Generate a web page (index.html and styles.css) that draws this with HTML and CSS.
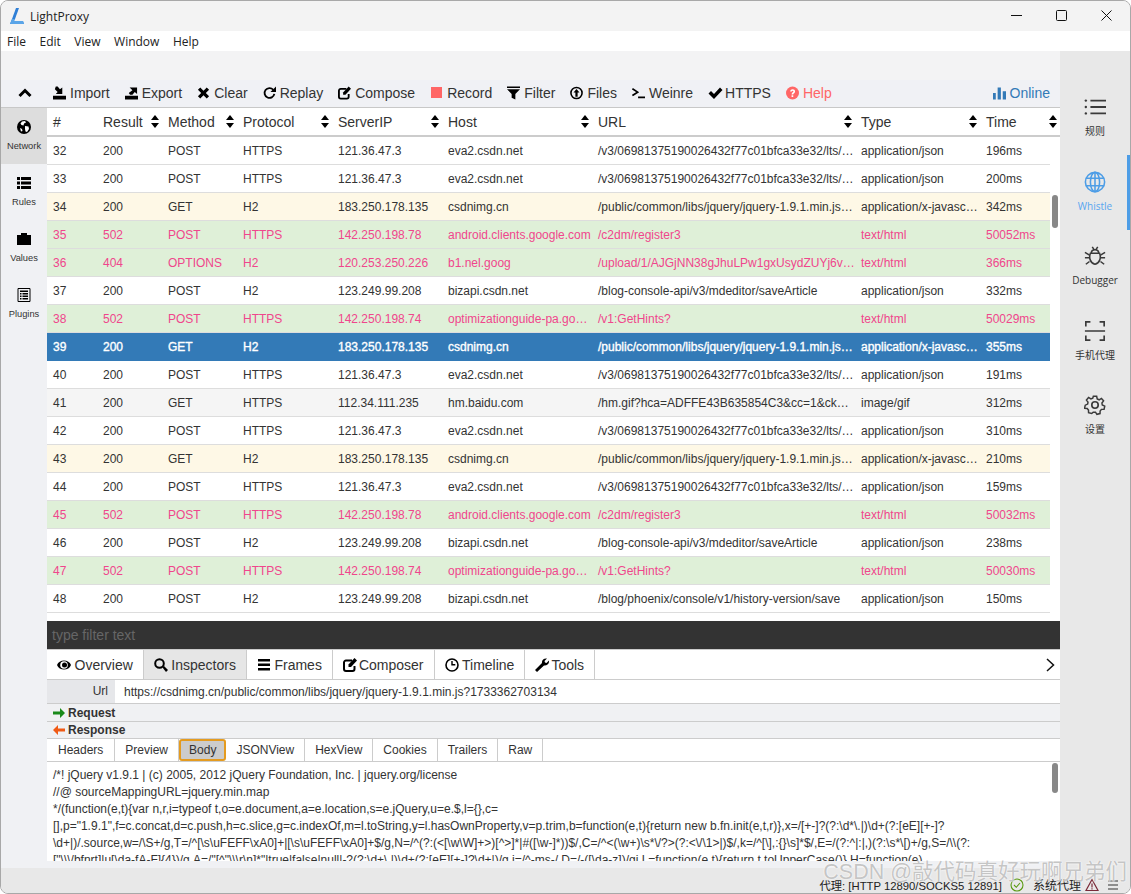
FILE: index.html
```html
<!DOCTYPE html>
<html lang="en">
<head>
<meta charset="utf-8">
<title>LightProxy</title>
<link rel="stylesheet" href="styles.css">
</head>
<body>
<div class="window">
  <header class="titlebar">
    <svg class="logo" viewBox="0 0 14 16"><path d="M6 0h3L5 11H2z" fill="#2f7fd6"/><path d="M2 11h3l-1 2h9l1 3H0z" fill="#2f7fd6"/><path d="M0 16l2-5h3l-1 2h9l1 3z" fill="#5aa5e8"/></svg>
    <span class="apptitle">LightProxy</span>
    <div class="winbtns">
      <svg class="winicon" viewBox="0 0 11 11"><path d="M0 5.500h11" stroke="#111" fill="none"/></svg>
      <svg class="winicon" viewBox="0 0 11 11"><rect x=".5" y=".5" width="10" height="10" rx="1" stroke="#111" fill="none"/></svg>
      <svg class="winicon" viewBox="0 0 11 11"><path d="M.5.5l10 10M10.500 .5l-10 10" stroke="#111" fill="none"/></svg>
    </div>
  </header>
  <nav class="menubar"><span>File</span><span>Edit</span><span>View</span><span>Window</span><span>Help</span></nav>
  <div class="app">
    <main class="main">
      <div class="spacer"></div>
      <div class="toolbar">
        <span class="collapse"><svg viewBox="0 0 14 10" class="chev"><path d="M1.500 8L7 2.500 12.500 8" fill="none" stroke="#000" stroke-width="3"/></svg></span>
        <span class="tool"><svg class="ic" viewBox="0 0 14 14"><path d="M0 10h14v4H0z"/><path d="M3 0l2 0 2.500 3L10 1v7H3l2-2-3-3z"/></svg>Import</span>
        <span class="tool"><svg class="ic" viewBox="0 0 14 14"><path d="M0 10h14v4H0z"/><path d="M5 1h8v7l-2.500-2L8 9H5.500L4 7l4-3z"/></svg>Export</span>
        <span class="tool"><svg class="ic" viewBox="0 0 14 14"><path d="M1 3.500L3.500 1 7 4.500 10.500 1 13 3.500 9.500 7 13 10.500 10.500 13 7 9.500 3.500 13 1 10.500 4.500 7z"/></svg>Clear</span>
        <span class="tool"><svg class="ic" viewBox="0 0 14 14"><path d="M11 3.500A5.300 5.300 0 1 0 12.200 8" fill="none" stroke="#000" stroke-width="2"/><path d="M14 0v6H8z"/></svg>Replay</span>
        <span class="tool"><svg class="ic" viewBox="0 0 14 14"><path d="M9 2.500H3a2 2 0 0 0-2 2V11a2 2 0 0 0 2 2h6.500a2 2 0 0 0 2-2V8" fill="none" stroke="#000" stroke-width="2"/><path d="M11.500 0L14 2.500 8 9H5.500V6.500z"/></svg>Compose</span>
        <span class="tool rec"><i class="recdot"></i>Record</span>
        <span class="tool"><svg class="ic" viewBox="0 0 14 14"><path d="M0 0h14v1.500H0z"/><path d="M0 3h14L9 8v6l-4-2V8z"/></svg>Filter</span>
        <span class="tool"><svg class="ic" viewBox="0 0 14 14"><circle cx="7" cy="7" r="6" fill="none" stroke="#000" stroke-width="1.700"/><path d="M7 2.800L10.200 6.500H8.200V11H5.800V6.500H3.800z"/></svg>Files</span>
        <span class="tool"><svg class="ic" viewBox="0 0 15 14"><path d="M.5 2l6 4-6 4" fill="none" stroke="#000" stroke-width="2"/><path d="M7 11h8v2H7z"/></svg>Weinre</span>
        <span class="tool tight"><svg class="ic wide" viewBox="0 0 15 14"><path d="M.5 7.500L3 5l3 3 6-6.500 2.500 2.500L6 13z"/></svg>HTTPS</span>
        <span class="tool help"><svg class="ic" viewBox="0 0 14 14"><circle cx="7" cy="7" r="7" fill="#f66"/><path d="M4.500 5.500C4.500 2.300 9.800 2.300 9.800 5.300c0 2-2 1.800-2 3.200H6c0-2.200 2-2.200 2-3.200 0-1.100-1.800-1.100-1.800.2zM6 9.500h1.800v1.800H6z" fill="#fff"/></svg>Help</span>
        <span class="tool online"><svg class="ic" viewBox="0 0 14 14"><path d="M0 7h3v7H0zM5 1h3.500v13H5zM10.500 5H14v9h-3.500z" fill="#337ab7"/></svg>Online</span>
      </div>
      <div class="content">
        <aside class="leftnav">
          <div class="lnav on"><svg class="lic" viewBox="0 0 14 14"><circle cx="7" cy="7" r="7"/><path d="M5 1.500l3-.5 1 1.500-2 1-.5 2-2-.5-1-1.500zM8 6l3.500.5.500 2.500-2 3-1.500-.5-.5-2.500zM3 8l2 1 .5 2-1.500.5z" fill="#fff"/></svg><span>Network</span></div>
          <div class="lnav"><svg class="lic" viewBox="0 0 14 14"><path d="M0 1h3v3H0zM4 1h10v3H4zM0 5.500h3v3H0zM4 5.500h10v3H4zM0 10h3v3H0zM4 10h10v3H4z"/></svg><span>Rules</span></div>
          <div class="lnav"><svg class="lic" viewBox="0 0 14 14"><path d="M4 1h6v2H4z"/><path d="M0 3h14v10H0z"/></svg><span>Values</span></div>
          <div class="lnav"><svg class="lic" viewBox="0 0 14 14"><path d="M1 .5h12v13H1z" fill="none" stroke="#000"/><path d="M3 2.500h8v1.500H3zM3 5h1.500v1.500H3zM5.500 5H11v1.500H5.500zM3 7.500h1.500V9H3zM5.500 7.500H11V9H5.500zM3 10h1.500v1.500H3zM5.500 10H11v1.500H5.500z"/></svg><span>Plugins</span></div>
        </aside>
        <section class="panel">
          <div class="list">
            <div class="row head">
              <div class="cell"># </div>
              <div class="cell sort">Result<i class="updown"></i></div>
              <div class="cell sort">Method<i class="updown"></i></div>
              <div class="cell sort">Protocol<i class="updown"></i></div>
              <div class="cell sort">ServerIP<i class="updown"></i></div>
              <div class="cell sort">Host<i class="updown"></i></div>
              <div class="cell sort">URL<i class="updown"></i></div>
              <div class="cell sort">Type<i class="updown"></i></div>
              <div class="cell sort">Time<i class="updown"></i></div>
            </div>
            <div class="row"><div class="cell">32</div><div class="cell">200</div><div class="cell">POST</div><div class="cell">HTTPS</div><div class="cell">121.36.47.3</div><div class="cell">eva2.csdn.net</div><div class="cell">/v3/06981375190026432f77c01bfca33e32/lts/collect/report</div><div class="cell">application/json</div><div class="cell">196ms</div></div>
            <div class="row"><div class="cell">33</div><div class="cell">200</div><div class="cell">POST</div><div class="cell">HTTPS</div><div class="cell">121.36.47.3</div><div class="cell">eva2.csdn.net</div><div class="cell">/v3/06981375190026432f77c01bfca33e32/lts/collect/report</div><div class="cell">application/json</div><div class="cell">200ms</div></div>
            <div class="row js"><div class="cell">34</div><div class="cell">200</div><div class="cell">GET</div><div class="cell">H2</div><div class="cell">183.250.178.135</div><div class="cell">csdnimg.cn</div><div class="cell">/public/common/libs/jquery/jquery-1.9.1.min.js?1733362703134</div><div class="cell">application/x-javascript</div><div class="cell">342ms</div></div>
            <div class="row err"><div class="cell">35</div><div class="cell">502</div><div class="cell">POST</div><div class="cell">HTTPS</div><div class="cell">142.250.198.78</div><div class="cell">android.clients.google.com</div><div class="cell">/c2dm/register3</div><div class="cell">text/html</div><div class="cell">50052ms</div></div>
            <div class="row err"><div class="cell">36</div><div class="cell">404</div><div class="cell">OPTIONS</div><div class="cell">H2</div><div class="cell">120.253.250.226</div><div class="cell">b1.nel.goog</div><div class="cell">/upload/1/AJGjNN38gJhuLPw1gxUsydZUYj6vKm2pQx</div><div class="cell">text/html</div><div class="cell">366ms</div></div>
            <div class="row"><div class="cell">37</div><div class="cell">200</div><div class="cell">POST</div><div class="cell">H2</div><div class="cell">123.249.99.208</div><div class="cell">bizapi.csdn.net</div><div class="cell">/blog-console-api/v3/mdeditor/saveArticle</div><div class="cell">application/json</div><div class="cell">332ms</div></div>
            <div class="row err"><div class="cell">38</div><div class="cell">502</div><div class="cell">POST</div><div class="cell">HTTPS</div><div class="cell">142.250.198.74</div><div class="cell">optimizationguide-pa.googleapis.com</div><div class="cell">/v1:GetHints?</div><div class="cell">text/html</div><div class="cell">50029ms</div></div>
            <div class="row sel"><div class="cell">39</div><div class="cell">200</div><div class="cell">GET</div><div class="cell">H2</div><div class="cell">183.250.178.135</div><div class="cell">csdnimg.cn</div><div class="cell">/public/common/libs/jquery/jquery-1.9.1.min.js?1733362703134</div><div class="cell">application/x-javascript</div><div class="cell">355ms</div></div>
            <div class="row"><div class="cell">40</div><div class="cell">200</div><div class="cell">POST</div><div class="cell">HTTPS</div><div class="cell">121.36.47.3</div><div class="cell">eva2.csdn.net</div><div class="cell">/v3/06981375190026432f77c01bfca33e32/lts/collect/report</div><div class="cell">application/json</div><div class="cell">191ms</div></div>
            <div class="row img"><div class="cell">41</div><div class="cell">200</div><div class="cell">GET</div><div class="cell">HTTPS</div><div class="cell">112.34.111.235</div><div class="cell">hm.baidu.com</div><div class="cell">/hm.gif?hca=ADFFE43B635854C3&amp;cc=1&amp;ck=1&amp;cl=24-bit</div><div class="cell">image/gif</div><div class="cell">312ms</div></div>
            <div class="row"><div class="cell">42</div><div class="cell">200</div><div class="cell">POST</div><div class="cell">HTTPS</div><div class="cell">121.36.47.3</div><div class="cell">eva2.csdn.net</div><div class="cell">/v3/06981375190026432f77c01bfca33e32/lts/collect/report</div><div class="cell">application/json</div><div class="cell">310ms</div></div>
            <div class="row js"><div class="cell">43</div><div class="cell">200</div><div class="cell">GET</div><div class="cell">H2</div><div class="cell">183.250.178.135</div><div class="cell">csdnimg.cn</div><div class="cell">/public/common/libs/jquery/jquery-1.9.1.min.js?1733362703134</div><div class="cell">application/x-javascript</div><div class="cell">210ms</div></div>
            <div class="row"><div class="cell">44</div><div class="cell">200</div><div class="cell">POST</div><div class="cell">HTTPS</div><div class="cell">121.36.47.3</div><div class="cell">eva2.csdn.net</div><div class="cell">/v3/06981375190026432f77c01bfca33e32/lts/collect/report</div><div class="cell">application/json</div><div class="cell">159ms</div></div>
            <div class="row err"><div class="cell">45</div><div class="cell">502</div><div class="cell">POST</div><div class="cell">HTTPS</div><div class="cell">142.250.198.78</div><div class="cell">android.clients.google.com</div><div class="cell">/c2dm/register3</div><div class="cell">text/html</div><div class="cell">50032ms</div></div>
            <div class="row"><div class="cell">46</div><div class="cell">200</div><div class="cell">POST</div><div class="cell">H2</div><div class="cell">123.249.99.208</div><div class="cell">bizapi.csdn.net</div><div class="cell">/blog-console-api/v3/mdeditor/saveArticle</div><div class="cell">application/json</div><div class="cell">238ms</div></div>
            <div class="row err"><div class="cell">47</div><div class="cell">502</div><div class="cell">POST</div><div class="cell">HTTPS</div><div class="cell">142.250.198.74</div><div class="cell">optimizationguide-pa.googleapis.com</div><div class="cell">/v1:GetHints?</div><div class="cell">text/html</div><div class="cell">50030ms</div></div>
            <div class="row"><div class="cell">48</div><div class="cell">200</div><div class="cell">POST</div><div class="cell">H2</div><div class="cell">123.249.99.208</div><div class="cell">bizapi.csdn.net</div><div class="cell">/blog/phoenix/console/v1/history-version/save</div><div class="cell">application/json</div><div class="cell">150ms</div></div>
            <i class="thumb listthumb"></i>
          </div>
          <div class="filter">type filter text</div>
          <div class="tabs">
            <span class="tab"><svg class="ic" viewBox="0 0 14 14"><path d="M0 7c2-6 12-6 14 0-2 6-12 6-14 0z"/><circle cx="7" cy="7" r="3.800" fill="#fff"/><circle cx="7.500" cy="7" r="2.500"/></svg>Overview</span>
            <span class="tab on"><svg class="ic" viewBox="0 0 14 14"><circle cx="5.500" cy="5.500" r="4.300" fill="none" stroke="#000" stroke-width="2"/><path d="M8.500 9.500l1.500-1.500 4 4-2 2z"/></svg>Inspectors</span>
            <span class="tab"><svg class="ic" viewBox="0 0 14 14"><path d="M1 1h12v2.500H1zM1 5.500h12V8H1zM1 10h12v2.500H1z"/></svg>Frames</span>
            <span class="tab tight"><svg class="ic" viewBox="0 0 14 14"><path d="M9 2.500H3a2 2 0 0 0-2 2V11a2 2 0 0 0 2 2h6.500a2 2 0 0 0 2-2V8" fill="none" stroke="#000" stroke-width="2"/><path d="M11.500 0L14 2.500 8 9H5.500V6.500z"/></svg>Composer</span>
            <span class="tab"><svg class="ic" viewBox="0 0 14 14"><circle cx="7" cy="7" r="6" fill="none" stroke="#000" stroke-width="1.600"/><path d="M6.300 3h1.400v4.300H6.300zM6.300 6h4v1.400h-4z"/></svg>Timeline</span>
            <span class="tab tight"><svg class="ic" viewBox="0 0 14 14"><path d="M0 12L7 5C6.500 2 9 0 12 .5L9.500 3l.5 1.500L11.500 5 14 2.500C14.500 5.500 12 8 9 7.500L2 14z"/></svg>Tools</span>
            <svg class="more" viewBox="0 0 9 14"><path d="M1 1l6.500 6L1 13" fill="none" stroke="#111" stroke-width="1.500"/></svg>
          </div>
          <div class="urlrow"><label class="urllabel">Url</label><span class="urlvalue">https://csdnimg.cn/public/common/libs/jquery/jquery-1.9.1.min.js?1733362703134</span></div>
          <div class="section"><svg class="arrow" viewBox="0 0 12 10"><path d="M0 3.500h7V0l5 5-5 5V6.500H0z" fill="#1a8a1a"/></svg>Request</div>
          <div class="section short"><svg class="arrow" viewBox="0 0 12 10"><path d="M12 3.500H5V0L0 5l5 5V6.500h7z" fill="#f05a14"/></svg>Response</div>
          <div class="subtabs"><span class="subtab">Headers</span><span class="subtab">Preview</span><span class="subtab on">Body</span><span class="subtab">JSONView</span><span class="subtab">HexView</span><span class="subtab">Cookies</span><span class="subtab">Trailers</span><span class="subtab">Raw</span></div>
          <div class="code">
            <div>/*! jQuery v1.9.1 | (c) 2005, 2012 jQuery Foundation, Inc. | jquery.org/license</div>
            <div>//@ sourceMappingURL=jquery.min.map</div>
            <div>*/(function(e,t){var n,r,i=typeof t,o=e.document,a=e.location,s=e.jQuery,u=e.$,l={},c=</div>
            <div>[],p="1.9.1",f=c.concat,d=c.push,h=c.slice,g=c.indexOf,m=l.toString,y=l.hasOwnProperty,v=p.trim,b=function(e,t){return new b.fn.init(e,t,r)},x=/[+-]?(?:\d*\.|)\d+(?:[eE][+-]?</div>
            <div>\d+|)/.source,w=/\S+/g,T=/^[\s\uFEFF\xA0]+|[\s\uFEFF\xA0]+$/g,N=/^(?:(&lt;[\w\W]+&gt;)[^&gt;]*|#([\w-]*))$/,C=/^&lt;(\w+)\s*\/?&gt;(?:&lt;\/\1&gt;|)$/,k=/^[\],:{}\s]*$/,E=/(?:^|:|,)(?:\s*\[)+/g,S=/\\(?:</div>
            <div>["\\\/bfnrt]|u[\da-fA-F]{4})/g,A=/"[^"\\\r\n]*"|true|false|null|-?(?:\d+\.|)\d+(?:[eE][+-]?\d+|)/g,j=/^-ms-/,D=/-([\da-z])/gi,L=function(e,t){return t.toUpperCase()},H=function(e)</div>
            <i class="thumb codethumb"></i>
          </div>
        </section>
      </div>
    </main>
    <aside class="rightnav">
      <div class="rnav"><svg class="ric" viewBox="0 0 24 24"><path d="M7 5h17M7 12h17M7 19h17" stroke="#3a3a3a" stroke-width="2" fill="none"/><circle cx="2" cy="5" r="1.300" fill="#3a3a3a"/><circle cx="2" cy="12" r="1.300" fill="#3a3a3a"/><circle cx="2" cy="19" r="1.300" fill="#3a3a3a"/></svg><span>规则</span></div>
      <div class="rnav on"><svg class="ric" viewBox="0 0 24 24" fill="none" stroke="#4d9de6" stroke-width="1.700"><circle cx="12" cy="12" r="10.500"/><ellipse cx="12" cy="12" rx="5" ry="10.500"/><path d="M12 1.500v21M2 8h20M2 16h20"/></svg><span>Whistle</span></div>
      <div class="rnav"><svg class="ric" viewBox="0 0 24 24" fill="none" stroke="#3a3a3a" stroke-width="1.700"><path d="M7 9h10c2 5 0 11-5 12-5-1-7-7-5-12z"/><path d="M8 9c0-5 8-5 8 0M9 2l2 3M15 2l-2 3M1 8l5 3M23 8l-5 3M1 14h5M23 14h-5M2 21l4-3M22 21l-4-3"/></svg><span>Debugger</span></div>
      <div class="rnav"><svg class="ric" viewBox="0 0 24 24" fill="none" stroke="#3a3a3a" stroke-width="1.800"><path d="M2 7V2h5M17 2h5v5M22 17v5h-5M7 22H2v-5M1 12h22"/></svg><span>手机代理</span></div>
      <div class="rnav"><svg class="ric" viewBox="0 0 24 24" fill="none" stroke="#3a3a3a" stroke-width="1.800"><circle cx="12" cy="12" r="3.500"/><path d="M10 1.500h4l.7 3.200 2.300 1 2.800-1.700 2.600 3-2 2.600.4 2.400 3 1.300-.8 3.900-3.200.1-1.600 2-.1 3.100-3.800.9-1.700-2.600h-2.800L8 22.300l-3.800-1-.1-3.100-1.600-2-3.200-.2.900-3.800 2.900-1.300.4-2.400-1.900-2.600 2.600-3L7 4.700l2.300-1z" transform="translate(1.200 1.200) scale(.9)"/></svg><span>设置</span></div>
      <i class="activebar"></i>
    </aside>
  </div>
  <footer class="status">
    <span class="proxy">代理: [HTTP 12890/SOCKS5 12891]</span>
    <svg class="sic check" viewBox="0 0 14 14" fill="none" stroke="#5a9a12" stroke-width="1.100"><circle cx="7" cy="7" r="6"/><path d="M4 7l2.300 2.300L10 5"/></svg>
    <span class="sys">系统代理</span>
    <svg class="sic warn" viewBox="0 0 14 14" fill="none" stroke="#7a2b3a" stroke-width="1.200"><path d="M7 1.500l6 11H1zM7 5.500v4M7 10.300v1.200"/></svg>
    <svg class="sic burger" viewBox="0 0 14 14" fill="none" stroke="#333" stroke-width="1.200"><path d="M2 3h10M2 7h10M2 11h10"/></svg>
    <span class="watermark">CSDN @敲代码真好玩啊兄弟们</span>
  </footer>
</div>
</body>
</html>
```

FILE: styles.css
```css
* { box-sizing: border-box; }
html, body { margin: 0; padding: 0; height: 100%; }
body { background: #fff; font-family: "Liberation Sans", "Noto Sans CJK SC", sans-serif; color: #333; overflow: hidden; }
.window { position: relative; width: 1131px; height: 894px; display: flex; flex-direction: column; border: 1px solid #a8a8a8; border-radius: 8px; overflow: hidden; background: #f3f3f3; }
.titlebar { height: 30px; flex: none; display: flex; align-items: center; padding-left: 9px; background: #f3f3f3; }
.logo { width: 14px; height: 16px; margin-right: 6px; }
.apptitle { font: 12px "Open Sans", sans-serif; color: #222; }
.winbtns { margin-left: auto; display: flex; gap: 34px; padding: 0 18px 2px 0; }
.winicon { width: 11px; height: 11px; display: block; }
.menubar { height: 20px; flex: none; background: #fff; display: flex; align-items: center; gap: 13.500px; padding-left: 6px; font: 12px "Open Sans", sans-serif; color: #222; }
.app { height: 817px; flex: none; display: flex; }
.main { width: 1059px; flex: none; display: flex; flex-direction: column; }
.spacer { height: 29px; flex: none; background: #f3f3f4; }
.toolbar { height: 28px; flex: none; display: flex; align-items: center; gap: 15px; background: #f0f1f5; border-bottom: 1px solid #c8c8c8; font-size: 14px; color: #333; padding: 0 10px 2px 0; }
.collapse { width: 37px; flex: none; display: flex; justify-content: flex-end; padding-right: 6px; }
.chev { width: 14px; height: 10px; display: block; }
.tool { display: flex; align-items: center; gap: 4px; white-space: nowrap; }
.tool.tight { gap: 2px; }
.ic { width: 13px; height: 14px; flex: none; display: block; }
.ic.wide { width: 15px; }
.tool.rec { margin-left: 1px; gap: 5px; }
.recdot { width: 11px; height: 11px; background: #f66; display: block; }
.tool.help { color: #f66; }
.tool.online { color: #337ab7; margin-left: auto; }
.content { flex: 1; min-height: 0; display: flex; }
.leftnav { width: 46px; flex: none; background: #f0f1f4; }
.lnav { height: 56px; display: flex; flex-direction: column; align-items: center; padding-top: 12px; gap: 7px; font-size: 9.300px; color: #333; }
.lnav.on { background: #ddd; }
.lic { width: 14px; height: 14px; display: block; }
.panel { width: 1013px; flex: none; display: flex; flex-direction: column; min-width: 0; background: #f0f1f4; }
.list { position: relative; height: 513px; flex: none; overflow: hidden; background: #fff; padding-right: 10px; }
.row { display: grid; grid-template-columns: 50px 65px 75px 95px 110px 150px 263px 125px 70px; height: 28px; align-items: center; border-bottom: 1px solid #ddd; font-size: 12px; color: #333; }
.cell { padding-left: 6px; white-space: nowrap; overflow: hidden; text-overflow: ellipsis; min-width: 0; }
.row.head { height: 29px; font-size: 14px; color: #333; border-bottom: 2px solid #ccc; margin-right: -10px; grid-template-columns: 50px 65px 75px 95px 110px 150px 263px 125px 80px; }
.sort { display: flex; justify-content: space-between; align-items: center; padding-right: 2.500px; }
.updown { position: relative; width: 9px; height: 13px; display: block; flex: none; }
.updown::before, .updown::after { content: ""; position: absolute; left: 0; border-left: 4.500px solid transparent; border-right: 4.500px solid transparent; }
.updown::before { top: 0; border-bottom: 5px solid #000; }
.updown::after { bottom: 0; border-top: 5px solid #000; }
.row.js { background: #fef8e6; }
.row.err { background: #dff0d8; color: #f0468c; }
.row.img { background: #f5f5f5; }
.row.sel { background: #337ab7; color: #fff; -webkit-text-stroke: .35px #fff; border-bottom-color: #337ab7; }
.thumb { position: absolute; right: 2px; width: 6px; background: #888; border-radius: 3px; display: block; }
.listthumb { top: 87px; height: 33px; }
.codethumb { top: 1px; height: 30px; }
.filter { height: 29px; flex: none; background: #333; color: #666; font-size: 14px; line-height: 28px; padding-left: 5px; border-bottom: 1px solid #ccc; }
.tabs { height: 30px; flex: none; display: flex; align-items: stretch; border-bottom: 1px solid #ccc; font-size: 14px; color: #333; position: relative; background: #fff; }
.tab { display: flex; align-items: center; gap: 3.500px; padding: 0 10px; border-right: 1px solid #ccc; white-space: nowrap; }
.tab .ic { width: 14px; }
.tab.tight { gap: 2px; }
.tab.on { background: #e6e6e6; }
.more { width: 9px; height: 14px; position: absolute; right: 5px; top: 8px; }
.urlrow { height: 24px; flex: none; display: flex; align-items: center; font-size: 12px; border-bottom: 1px solid #ccc; background: #fff; }
.urllabel { width: 68px; height: 100%; flex: none; background: #e6e7ea; text-align: right; padding-right: 7px; line-height: 23px; }
.urlvalue { padding-left: 9px; }
.section { height: 18px; flex: none; display: flex; align-items: center; gap: 3px; padding-left: 6px; background: #f0f1f3; border-bottom: 1px solid #ccc; font-size: 12px; font-weight: bold; color: #333; }
.section.short { height: 17px; }
.arrow { width: 12px; height: 10px; display: block; }
.subtabs { height: 23px; flex: none; display: flex; align-items: stretch; border-bottom: 1px solid #ccc; font-size: 12px; background: #fff; }
.subtab { display: flex; align-items: center; padding: 0 10px; border-right: 1px solid #ccc; }
.subtab:first-child { padding: 0 11px; }
.subtab.on { background: #ccc; border: 2px solid #e49b20; border-radius: 3px; padding: 0 8px; }
.code { position: relative; height: 99px; flex: none; overflow: hidden; padding: 5px 0 0 6px; font-size: 12px; line-height: 17px; color: #333; background: #fff; }
.code div { white-space: nowrap; }
.rightnav { position: relative; flex: 1; background: #e8e8e8; padding-top: 45px; }
.rnav { height: 74.500px; display: flex; flex-direction: column; align-items: center; gap: 6px; font: 10px/14px "Open Sans", "Noto Sans CJK SC", sans-serif; color: #333; }
.rnav.on { color: #58a6f0; }
.ric { width: 22px; height: 22px; display: block; flex: none; }
.activebar { position: absolute; right: 0; top: 104px; width: 3px; height: 75px; background: #4d9de6; display: block; }
.status { position: relative; height: 25px; flex: none; background: #e8e8e8; display: flex; align-items: center; justify-content: flex-end; padding: 8px 10px 0 0; color: #222; }
.proxy { font-size: 11.300px; }
.sys { font-size: 12px; }
.sic { width: 14px; height: 14px; display: block; flex: none; }
.check { margin: 0 9px 0 8px; }
.warn { margin: 0 7px 0 4px; }
.watermark { position: absolute; right: 3px; bottom: 7px; font-size: 21.500px; line-height: 28px; color: rgba(140, 140, 140, .5); text-shadow: 0 0 1px #fff, 0 0 2px #fff; white-space: nowrap; }
```
